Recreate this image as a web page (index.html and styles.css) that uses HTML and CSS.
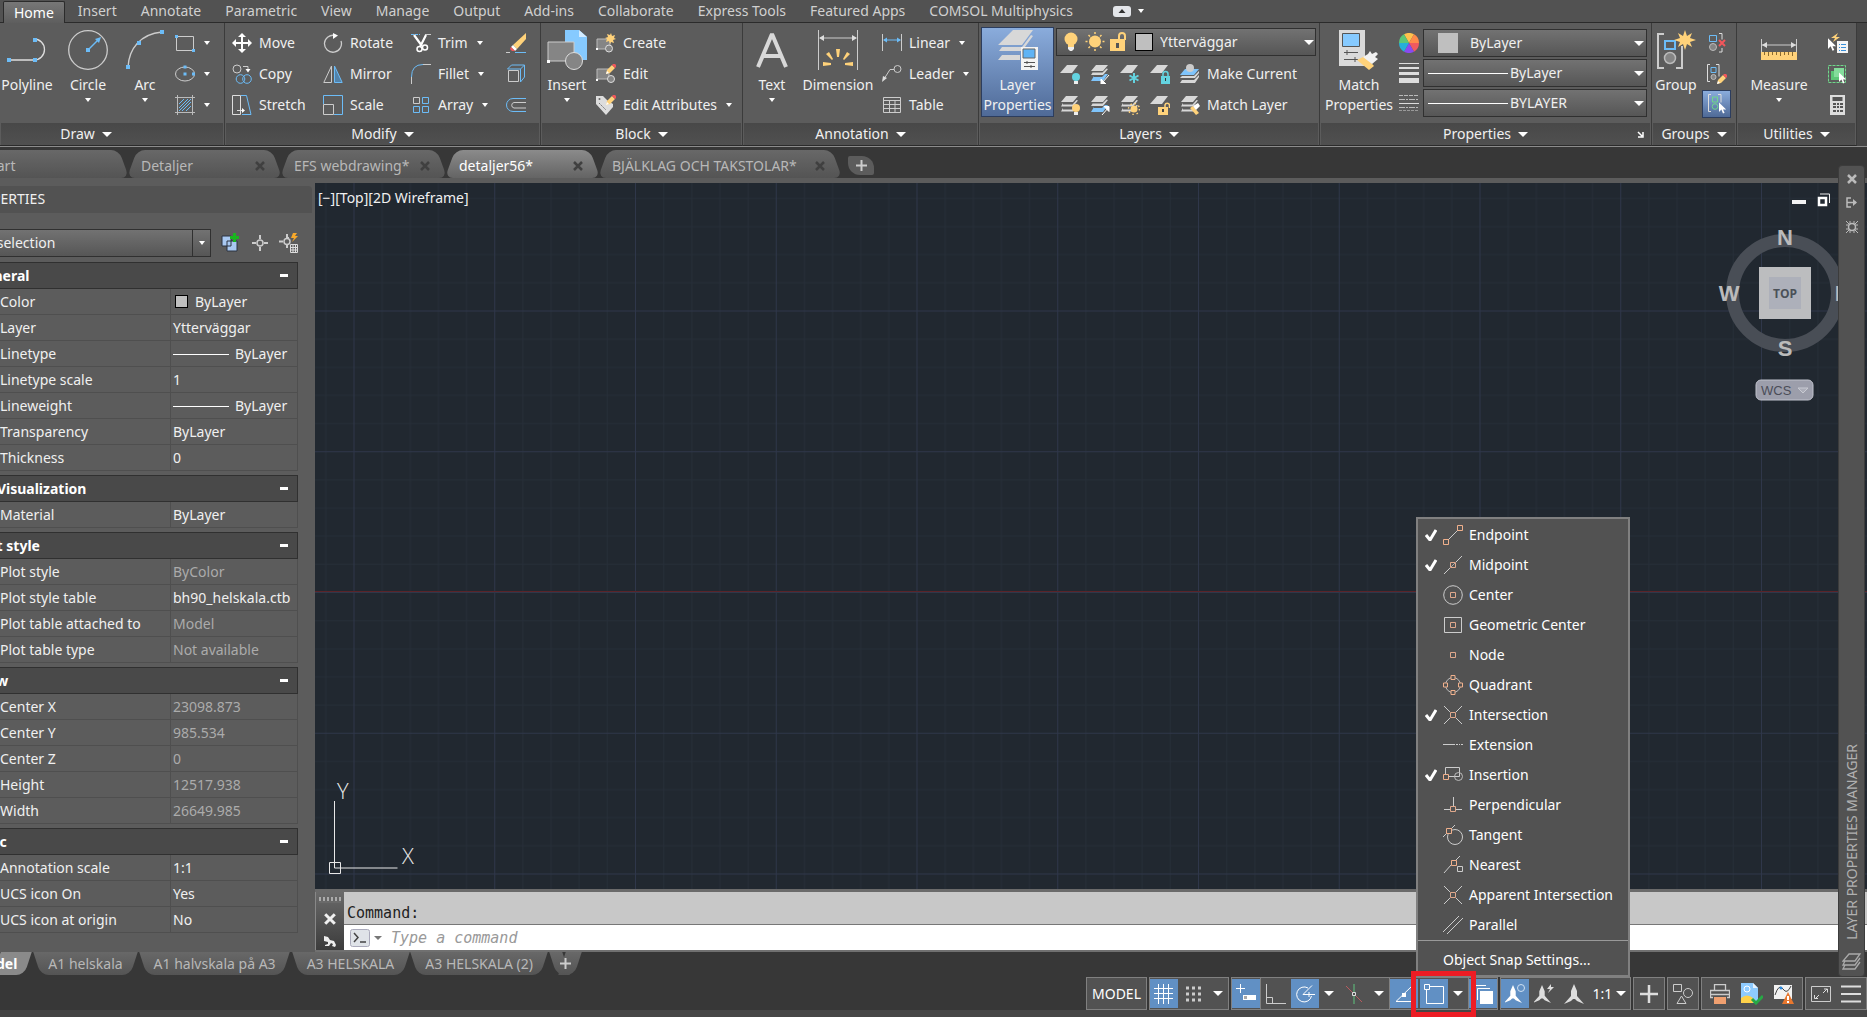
FILE: index.html
```html
<!DOCTYPE html>
<html lang="en">
  <head>
    <meta charset="UTF-8" />
    <meta name="viewport" content="width=device-width, initial-scale=1.0" />
    <title>detaljer56</title>
    <link rel="stylesheet" href="styles.css">
  </head>
  <body>
    <!-- Shared icon shapes -->
    <svg class="sprite" aria-hidden="true">
      <symbol id="plane" viewBox="0 0 20 20"><path d="M7 1h11l-6 8H0z" fill="#d8d8d8" /></symbol>
      <symbol id="stack" viewBox="0 0 20 20">
        <path d="M6 1h12l-5 6H1z" fill="#d8d8d8" />
        <path d="M3 8L1 11.500h12l5-6-1.500-.5-4 4.500H3zM3 13l-2 3.500h12l5-6-1.500-.5-4 4.500H3z" fill="#d8d8d8" />
      </symbol>
      <symbol id="stack-blue" viewBox="0 0 20 20">
        <path d="M6 1h12l-5 6H1zM3 8L1 11h12l5-6-1.500-.5-4 4H3z" fill="#d8d8d8" />
        <path d="M4 12l-3 5h12l5-7h-3l-3 3H4z" fill="#7fc4fb" />
      </symbol>
      <symbol id="pencil" viewBox="0 0 10 10">
        <path d="M0 10l1-4 5-5 3 3-5 5z" fill="#ffd27a" /><path d="M6 1l1-1h2l1 1v2L9 4z" fill="#f2565b" /><path d="M0 10l1-3 2 2z" fill="#fff" />
      </symbol>
      <symbol id="cursor" viewBox="0 0 10 14"><path d="M0 0v12l3-3 2 5 2-1-2-4h4z" fill="#fff" /></symbol>
      <symbol id="close" viewBox="0 0 10 10"><path d="M1 1l8 8M9 1L1 9" stroke="currentColor" stroke-width="2.500" /></symbol>
      <symbol id="snap-x" viewBox="0 0 20 20">
        <path d="M1 1l6 6M13 13l6 6M19 1l-6 6M7 13l-6 6" stroke="#ccc" /><path d="M7.500 7.500h5v5h-5z" stroke="#e0a98c" fill="none" />
      </symbol>
      <symbol id="person" viewBox="0 0 20 20"><path d="M10 0l3 7v5l7 8-7-3-2-2h-2l-2 2-7 3 7-8V7z" fill="currentColor" /></symbol>
    </svg>

    <nav class="ribbon-tabs">
      <button class="ribbon-tab active">Home</button>
      <button class="ribbon-tab">Insert</button>
      <button class="ribbon-tab">Annotate</button>
      <button class="ribbon-tab">Parametric</button>
      <button class="ribbon-tab">View</button>
      <button class="ribbon-tab">Manage</button>
      <button class="ribbon-tab">Output</button>
      <button class="ribbon-tab">Add-ins</button>
      <button class="ribbon-tab">Collaborate</button>
      <button class="ribbon-tab">Express Tools</button>
      <button class="ribbon-tab">Featured Apps</button>
      <button class="ribbon-tab">COMSOL Multiphysics</button>
      <button class="ribbon-toggle" aria-label="Minimize ribbon">
        <svg width="18" height="11" viewBox="0 0 18 11"><rect width="18" height="11" rx="3" fill="#e4e6ea" /><path d="M5.500 7L9 3l3.500 4z" fill="#333" /></svg>
        <i class="caret"></i>
      </button>
    </nav>

    <section class="ribbon">
      <div class="panel panel-draw">
        <div class="panel-body">
          <button class="tool-big">
            <svg width="40" height="40" viewBox="0 0 40 40"><path d="M1 30h26a10.500 10.500 0 0 0 0-21" stroke="#ddd" fill="none" stroke-width="1.300" /><path d="M0 28h4v4H0zM26 28h4v4h-4zM26 8h4v4h-4z" fill="#6cbcf7" /></svg>
            Polyline
          </button>
          <button class="tool-big">
            <svg width="40" height="40" viewBox="0 0 40 40"><circle cx="20" cy="20" r="19.300" stroke="#ccc" fill="none" stroke-width="1.300" /><path d="M20 20l11-11" stroke="#6cbcf7" stroke-width="1.500" /><path d="M18 18h4v4h-4zM27 9l6-2-2 6z" fill="#6cbcf7" /></svg>
            Circle<i class="caret"></i>
          </button>
          <button class="tool-big">
            <svg width="40" height="40" viewBox="0 0 40 40"><path d="M3 37C4 19 15 4 37 2" stroke="#ccc" fill="none" stroke-width="1.300" /><path d="M1 35h4v4H1zM12 11h4v4h-4zM35 0h4v4h-4z" fill="#6cbcf7" /></svg>
            Arc<i class="caret"></i>
          </button>
          <div class="tools">
            <button class="tool" aria-label="Rectangle"><svg width="20" height="20" viewBox="0 0 20 20"><path d="M1.500 3.500h17v14h-17z" stroke="#ccc" fill="none" /><path d="M0 2h3v3H0zM17 16h3v3h-3z" fill="#6cbcf7" /></svg><i class="caret"></i></button>
            <button class="tool" aria-label="Ellipse"><svg width="20" height="20" viewBox="0 0 20 20"><ellipse cx="10" cy="10" rx="9.500" ry="7" stroke="#ccc" fill="none" /><path d="M8.500 1.500h3v3h-3zM8.500 8.500h3v3h-3zM17 8.500h3v3h-3z" fill="#6cbcf7" /></svg><i class="caret"></i></button>
            <button class="tool" aria-label="Hatch"><svg width="20" height="20" viewBox="0 0 20 20"><path d="M0 2.500h20M0 17.500h20M2.500 0v20M17.500 0v20" stroke="#bbb" /><path d="M4 9l5-5M4 13l9-9M4 16L16 4M7 16l9-9M11 16l5-5" stroke="#6cbcf7" /></svg><i class="caret"></i></button>
          </div>
        </div>
        <button class="panel-title">Draw<i class="caret wide"></i></button>
      </div>

      <div class="panel panel-modify">
        <div class="panel-body">
          <div class="tools">
            <button class="tool"><svg width="20" height="20" viewBox="0 0 20 20"><path d="M10 0l4 4h-3v5h5V6l4 4-4 4v-3h-5v5h3l-4 4-4-4h3v-5H4v3l-4-4 4-4v3h5V4H6z" fill="#fff" /></svg>Move</button>
            <button class="tool"><svg width="20" height="20" viewBox="0 0 20 20"><circle cx="5" cy="5" r="4" stroke="#ccc" fill="none" /><path d="M11 2.500h5V6" stroke="#ccc" fill="none" /><path d="M13.500 5h5L16 8.500z" fill="#fff" /><circle cx="8.500" cy="15" r="4.300" stroke="#6cbcf7" fill="none" /><circle cx="15" cy="15" r="4.300" stroke="#6cbcf7" fill="none" /></svg>Copy</button>
            <button class="tool"><svg width="20" height="20" viewBox="0 0 20 20"><path d="M.5.500h8v19h-8zM5 15.500h6" stroke="#ddd" fill="none" /><path d="M10 13l3 2.500-3 2.500z" fill="#fff" /><path d="M9 .5h5.500l4.500 19h-9" stroke="#6cbcf7" fill="none" /></svg>Stretch</button>
          </div>
          <div class="tools">
            <button class="tool"><svg width="20" height="20" viewBox="0 0 20 20"><path d="M18 8a8.500 8.500 0 1 1-6-5.500" stroke="#ccc" fill="none" stroke-width="1.300" /><path d="M10 0l5 2.500L10 6z" fill="#fff" /></svg>Rotate</button>
            <button class="tool"><svg width="20" height="20" viewBox="0 0 20 20"><path d="M8.500 2v16.500H.800z" stroke="#ccc" fill="none" /><path d="M11.500 2v16.500h7.700z" stroke="#6cbcf7" fill="#5283ab" /></svg>Mirror</button>
            <button class="tool"><svg width="20" height="20" viewBox="0 0 20 20"><path d="M.5 9V.5h19v19H11" stroke="#6cbcf7" fill="none" /><path d="M.5 9.500h10v10H.5z" stroke="#ccc" fill="none" /></svg>Scale</button>
          </div>
          <div class="tools">
            <button class="tool"><svg width="20" height="20" viewBox="0 0 20 20"><path d="M0 1.500h9" stroke="#6cbcf7" stroke-dasharray="3 1" /><path d="M14 1.500h6" stroke="#ccc" /><path d="M3 2l8 11M15 2L9 14" stroke="#fff" stroke-width="2.200" /><circle cx="8.500" cy="16" r="2.500" stroke="#fff" stroke-width="1.500" fill="none" /><circle cx="14" cy="14.500" r="2.500" stroke="#fff" stroke-width="1.500" fill="none" /></svg>Trim<i class="caret"></i></button>
            <button class="tool"><svg width="20" height="20" viewBox="0 0 20 20"><path d="M.5 20v-7M12 .500h8" stroke="#ccc" /><path d="M.5 13Q.500.500 12 .500" stroke="#6cbcf7" fill="none" /></svg>Fillet<i class="caret"></i></button>
            <button class="tool"><svg width="20" height="20" viewBox="0 0 20 20"><path d="M2.500 2.500h6v6h-6z" stroke="#ccc" fill="none" /><path d="M11.500 2.500h6v6h-6zM2.500 11.500h6v6h-6zM11.500 11.500h6v6h-6z" stroke="#6cbcf7" fill="none" /></svg>Array<i class="caret"></i></button>
          </div>
          <div class="tools">
            <button class="tool" aria-label="Erase"><svg width="20" height="20" viewBox="0 0 20 20"><path d="M0 19.500h4" stroke="#ccc" /><path d="M9 19.500h11" stroke="#6cbcf7" /><path d="M20 0v6l-9 10-4-4z" fill="#ffd27a" /><path d="M7 12l4 4-2 2-4-4z" fill="#fff" /><path d="M5 14l4 4H6l-2-2z" fill="#f2565b" /></svg></button>
            <button class="tool" aria-label="Explode"><svg width="20" height="20" viewBox="0 0 20 20"><path d="M2.500 6.500h10v11h-10z" stroke="#ccc" fill="none" /><path d="M1.500 5l4-4h13v12l-4 5M14.500 18V5h-13M14.500 5l4-4" stroke="#6cbcf7" fill="none" /></svg></button>
            <button class="tool" aria-label="Offset"><svg width="20" height="20" viewBox="0 0 20 20"><path d="M20 3.500H7a6.500 6.500 0 0 0 0 13h13" stroke="#6cbcf7" fill="none" /><path d="M20 7.500H8a2.800 2.800 0 0 0 0 5.500h12" stroke="#ccc" fill="none" /></svg></button>
          </div>
        </div>
        <button class="panel-title">Modify<i class="caret wide"></i></button>
      </div>

      <div class="panel panel-block">
        <div class="panel-body">
          <button class="tool-big">
            <svg width="40" height="40" viewBox="0 0 40 40"><path d="M18 0h14l8 7v23H18z" fill="#86caff" /><path d="M32 0l8 7h-8z" fill="#d3ebff" /><path d="M1 12h26v19H1z" fill="#858585" stroke="#ccc" /><circle cx="27" cy="31" r="8.500" fill="#858585" stroke="#ddd" /><path d="M0 30h3v3H0z" fill="#fff" /></svg>
            Insert<i class="caret"></i>
          </button>
          <div class="tools">
            <button class="tool"><svg width="20" height="20" viewBox="0 0 20 20"><path d="M1 6h13v10H1z" fill="#858585" stroke="#bbb" /><circle cx="13" cy="15.500" r="3.500" fill="#858585" stroke="#ddd" /><path d="M15 0l1 3 3-1-1 3 2 1-3 1 1 3-3-1-1 2-1-3-3 1 1-3-2-1 3-1-1-3 3 1z" fill="#ffd27a" /><path d="M0 15h2v2H0z" fill="#fff" /></svg>Create</button>
            <button class="tool"><svg width="20" height="20" viewBox="0 0 20 20"><path d="M1 5h12v10H1z" fill="#858585" stroke="#bbb" /><circle cx="15" cy="15" r="3.500" fill="#858585" stroke="#ddd" /><use href="#pencil" x="10" y="0" width="10" height="10" /><path d="M0 15h2v2H0z" fill="#fff" /></svg>Edit</button>
            <button class="tool"><svg width="20" height="20" viewBox="0 0 20 20"><path d="M0 1h7l5 5 5 3v3l-7 8L0 9z" fill="#ddd" /><path d="M3 8l7 7" stroke="#777" stroke-dasharray="2 1" /><circle cx="3.500" cy="4" r="1" fill="#666" /><use href="#pencil" x="10" y="0" width="10" height="10" /></svg>Edit Attributes<i class="caret"></i></button>
          </div>
        </div>
        <button class="panel-title">Block<i class="caret wide"></i></button>
      </div>

      <div class="panel panel-annotation">
        <div class="panel-body">
          <button class="tool-big">
            <svg width="40" height="40" viewBox="0 0 40 40"><path d="M6 37L20 4l14 33M11 26h18" stroke="#d8d8d8" stroke-width="4" fill="none" stroke-linejoin="bevel" /></svg>
            Text<i class="caret"></i>
          </button>
          <button class="tool-big">
            <svg width="40" height="40" viewBox="0 0 40 40"><path d="M.5 0v40M39.500 0v40M2 8h36" stroke="#ccc" /><path d="M1 8l5-3v6zM39 8l-5-3v6z" fill="#ddd" /><path d="M18 19h4l-1 8h-2zM8 24l3-2 4 7-1 1zM32 24l-3-2-4 7 1 1zM5 32l8 1v2l-8 1zM35 32l-8 1v2l8 1z" fill="#ffd27a" /></svg>
            Dimension
          </button>
          <div class="tools">
            <button class="tool"><svg width="20" height="20" viewBox="0 0 20 20"><path d="M.5 1v17M19.500 1v17" stroke="#ccc" /><path d="M2 7h16" stroke="#6cbcf7" /><path d="M1 7l4-2.500v5zM19 7l-4-2.500v5z" fill="#6cbcf7" /></svg>Linear<i class="caret"></i></button>
            <button class="tool"><svg width="20" height="20" viewBox="0 0 20 20"><path d="M2 15l6-9.500h4" stroke="#ccc" fill="none" /><circle cx="15.500" cy="5" r="3.500" stroke="#ccc" fill="none" /><path d="M0 18l1-6 4 2z" fill="#ddd" /></svg>Leader<i class="caret"></i></button>
            <button class="tool"><svg width="20" height="20" viewBox="0 0 20 20"><path d="M1.500 2.500h17v15h-17zM2 5.500h16M2 9.500h16M2 13.500h16M7.500 6v11M13 6v11" stroke="#ccc" fill="none" /></svg>Table</button>
          </div>
        </div>
        <button class="panel-title">Annotation<i class="caret wide"></i></button>
      </div>

      <div class="panel panel-layers">
        <div class="panel-body">
          <button class="tool-big pressed">
            <svg width="40" height="40" viewBox="0 0 40 40"><path d="M15 0h20L24 15H0zM4 17H24l9-12 2 1-11 15H1zM4 25H22v5H0z" fill="#d8d8d8" /><path d="M23 17h17v23H23z" fill="#f4f4f4" /><path d="M25 19h12v9H25z" fill="#5fb3f5" stroke="#666" /><path d="M26 32.500h11M26 36.500h11M29 31v3M33 35v3" stroke="#555" /></svg>
            Layer<br>Properties
          </button>
          <div class="layer-tools">
            <div class="combo">
              <svg width="62" height="20" viewBox="0 0 62 20"><circle cx="7" cy="7" r="6.500" fill="#ffd27a" /><path d="M4 12h6v3H4z" fill="#ffd27a" /><path d="M4 15h6v2l-2 2H6l-2-2z" fill="#eee" /><circle cx="31" cy="9.500" r="6" fill="#ffd27a" /><path d="M31 0v2M31 17v2M21.500 9.500h2M38.500 9.500h2M24.500 3l1.500 1.500M36 14.500l1.500 1.500M24.500 16l1.500-1.500M36 4.500L37.500 3" stroke="#ffd27a" stroke-width="1.500" /><path d="M46 7h15v12H46z" fill="#ffd27a" /><path d="M56 8V4a3 3 0 0 1 6 0v4" transform="translate(-1)" stroke="#ffd27a" stroke-width="2" fill="none" /><path d="M52 11h3v5h-3z" fill="#555" /></svg>
              <i class="swatch framed"></i>
              <select aria-label="Layer"><option>Ytterväggar</option></select>
              <i class="caret wide"></i>
            </div>
            <div class="layer-row">
              <button aria-label="Layer off"><svg width="20" height="20" viewBox="0 0 20 20"><use href="#plane" width="20" height="20" /><circle cx="16" cy="13" r="4" fill="#63d3e0" /><path d="M14 17h4v3h-4z" fill="#eee" /></svg></button>
              <button aria-label="Isolate"><svg width="20" height="20" viewBox="0 0 20 20"><use href="#stack-blue" width="20" height="20" /><path d="M19 11l-7 8M11 20v-5l5 5z" stroke="#fff" fill="#fff" /></svg></button>
              <button aria-label="Freeze"><svg width="20" height="20" viewBox="0 0 20 20"><use href="#plane" width="20" height="20" /><path d="M14 9v10M9.500 11.500l9 5M9.500 16.500l9-5" stroke="#63d3e0" stroke-width="2" /></svg></button>
              <button aria-label="Lock"><svg width="20" height="20" viewBox="0 0 20 20"><use href="#plane" width="20" height="20" /><path d="M11 12h9v8h-9z" fill="#63d3e0" /><path d="M13 12v-2a2.500 2.500 0 0 1 5 0v2" stroke="#63d3e0" stroke-width="1.500" fill="none" /><path d="M15 14h1v3h-1z" fill="#333" /></svg></button>
              <button class="labelled"><svg width="20" height="20" viewBox="0 0 20 20"><path d="M5 5h14l-5 6H0z" fill="#7fc4fb" /><path d="M2 12h12l5-5v2l-4 5H0zM2 16h12l5-5v2l-4 6H0z" fill="#d8d8d8" /><circle cx="10" cy="4" r="4" fill="#ccc" /></svg>Make Current</button>
            </div>
            <div class="layer-row">
              <button aria-label="Turn all layers on"><svg width="20" height="20" viewBox="0 0 20 20"><use href="#stack" width="20" height="20" /><circle cx="16" cy="13" r="4" fill="#ffd27a" /><path d="M14 17h4v3h-4z" fill="#eee" /></svg></button>
              <button aria-label="Unisolate"><svg width="20" height="20" viewBox="0 0 20 20"><use href="#stack-blue" width="20" height="20" /><path d="M12 20l7-8M14 11.500h5v5z" stroke="#fff" fill="#fff" /></svg></button>
              <button aria-label="Thaw all layers"><svg width="20" height="20" viewBox="0 0 20 20"><use href="#stack" width="20" height="20" /><circle cx="14" cy="14" r="3.500" fill="#ffd27a" /><circle cx="14" cy="14" r="5.500" fill="none" stroke="#ffd27a" stroke-width="1.500" stroke-dasharray="1.500 2.800" /></svg></button>
              <button aria-label="Unlock"><svg width="20" height="20" viewBox="0 0 20 20"><use href="#plane" width="20" height="20" /><path d="M8 12h10v8H8z" fill="#ffd27a" /><path d="M15 12v-2a2.300 2.300 0 0 1 4.500 0v3" stroke="#ffd27a" stroke-width="1.500" fill="none" /><path d="M12 14h2v3h-2z" fill="#444" /></svg></button>
              <button class="labelled"><svg width="20" height="20" viewBox="0 0 20 20"><use href="#stack" width="20" height="20" /><path d="M10 13l3-2 6 7-3 2z" fill="#ffd27a" /><path d="M13 11l5-3 2 3-4 4z" fill="#fff" /></svg>Match Layer</button>
            </div>
          </div>
        </div>
        <button class="panel-title">Layers<i class="caret wide"></i></button>
      </div>

      <div class="panel panel-properties">
        <div class="panel-body">
          <button class="tool-big">
            <svg width="40" height="40" viewBox="0 0 40 40"><path d="M0 0h26v36H0z" fill="#dadada" /><path d="M3.500 3.500h17v13h-17z" fill="#86caff" stroke="#555" /><path d="M5 22.500h14M5 29.500h14M8 20v5M16 27v5" stroke="#555" /><path d="M18 30l8-4 9 10-5 4z" fill="#ffd27a" /><path d="M24 27l5-3 2-3 2 3 4-2 2 2-3 3 3 2-6 5z" fill="#f2f2f2" /></svg>
            Match<br>Properties
          </button>
          <div class="property-combos">
            <svg width="20" height="20" viewBox="-10 -10 20 20"><path d="M0 0L-5-8.660A10 10 0 0 1 5-8.660z" fill="#ffc14d" /><path d="M0 0L5-8.660A10 10 0 0 1 10 0z" fill="#ff8a4a" /><path d="M0 0h10A10 10 0 0 1 5 8.660z" fill="#f05a5f" /><path d="M0 0l5 8.660a10 10 0 0 1-10 0z" fill="#8a4af0" /><path d="M0 0l-5 8.660A10 10 0 0 1-10 0z" fill="#25b0d8" /><path d="M0 0h-10A10 10 0 0 1-5-8.660z" fill="#5cc777" /></svg>
            <div class="combo">
              <i class="swatch"></i>
              <select aria-label="Object color"><option>ByLayer</option></select>
              <i class="caret wide"></i>
            </div>
            <svg width="20" height="20" viewBox="0 0 20 20"><path d="M0 0h20v1H0zM0 4h20v2H0zM0 9h20v3H0zM0 15h20v5H0z" fill="#ddd" /></svg>
            <div class="combo">
              <i class="line-sample"></i>
              <select aria-label="Lineweight"><option>ByLayer</option></select>
              <i class="caret wide"></i>
            </div>
            <svg width="20" height="20" viewBox="0 0 20 20"><path d="M0 2.500h20" stroke="#bbb" stroke-dasharray="4 1" /><path d="M0 6.500h20M0 14.500h20" stroke="#bbb" stroke-dasharray="6 1 2 1" /><path d="M0 10.500h20" stroke="#ddd" /><path d="M0 17.500h20" stroke="#999" stroke-dasharray="3 1" /></svg>
            <div class="combo">
              <i class="line-sample"></i>
              <select aria-label="Linetype"><option>BYLAYER</option></select>
              <i class="caret wide"></i>
            </div>
          </div>
        </div>
        <div class="panel-title">
          <button>Properties<i class="caret wide"></i></button>
          <button class="launcher" aria-label="Open properties palette"><svg width="7" height="7" viewBox="0 0 7 7"><path d="M1 1l4 4M6 1v5H1" stroke="#fff" stroke-width="1.500" fill="none" /></svg></button>
        </div>
      </div>

      <div class="panel panel-groups">
        <div class="panel-body">
          <button class="tool-big">
            <svg width="40" height="40" viewBox="0 0 40 40"><path d="M8 4H2v34h6M20 38h6V16" stroke="#ccc" stroke-width="2" fill="none" /><path d="M9 11h10v8H9z" stroke="#6cbcf7" stroke-width="2" fill="none" /><circle cx="14" cy="28" r="5.500" fill="#858585" stroke="#bbb" stroke-width="1.500" /><path d="M29 0l2 6 5-3-2 5 6 2-6 2 2 5-5-3-2 6-2-6-5 3 2-5-6-2 6-2-2-5 5 3z" fill="#ffd27a" /></svg>
            Group
          </button>
          <div class="tools icon-only">
            <button class="tool" aria-label="Ungroup"><svg width="20" height="20" viewBox="0 0 20 20"><path d="M2.500 2.500h7v6h-7z" stroke="#6cbcf7" fill="none" /><circle cx="6" cy="14" r="3.500" fill="#858585" stroke="#bbb" /><path d="M12 .5h3v6M15 15v4h-3" stroke="#ddd" fill="none" /><path d="M12 7l6 6M18 7l-6 6" stroke="#f2565b" stroke-width="2" /></svg></button>
            <button class="tool" aria-label="Group edit"><svg width="20" height="20" viewBox="0 0 20 20"><path d="M3 .5H.500v17H3M9 .5h3v12" stroke="#ddd" fill="none" /><path d="M4 3.500h5v5H4z" stroke="#6cbcf7" fill="none" /><circle cx="6.500" cy="13" r="2.500" fill="#858585" stroke="#bbb" /><use href="#pencil" x="10" y="10" width="10" height="10" /></svg></button>
            <button class="tool pressed" aria-label="Group selection"><svg width="20" height="20" viewBox="0 0 20 20"><path d="M4 .5H1.500v17H4M11 .5h3v8" stroke="#ddd" fill="none" /><path d="M5.500 3h5v5h-5z" stroke="#6fd98a" fill="none" /><circle cx="8" cy="12.500" r="2.800" stroke="#6fd98a" fill="none" /><use href="#cursor" x="12" y="8" width="8" height="12" /></svg></button>
          </div>
        </div>
        <button class="panel-title">Groups<i class="caret wide"></i></button>
      </div>

      <div class="panel panel-utilities">
        <div class="panel-body">
          <button class="tool-big">
            <svg width="40" height="40" viewBox="0 0 40 40"><path d="M2.500 9v20M37.500 9v20M3 15h34" stroke="#ccc" /><path d="M3 15l5-3v6zM37 15l-5-3v6z" fill="#ddd" /><path d="M2 22h36v8H2z" fill="#ffd27a" /><path d="M5.500 22v3M9.500 22v4M13.500 22v3M17.500 22v3M21.500 22v4M25.500 22v3M29.500 22v3M33.500 22v4" stroke="#8a6a30" /></svg>
            Measure<i class="caret"></i>
          </button>
          <div class="tools icon-only">
            <button class="tool" aria-label="Quick select"><svg width="20" height="20" viewBox="0 0 20 20"><path d="M9 8h11v12H9z" fill="#f4f4f4" /><path d="M11 11.500h1M11 14.500h1M11 17.500h1M13 11.500h5M13 14.500h5M13 17.500h5" stroke="#3a8fd8" /><use href="#cursor" x="0" y="5" width="9" height="13" /><path d="M10 0L3 5h4l-2 4 7-5H8z" fill="#ffd27a" /></svg></button>
            <button class="tool" aria-label="Select all"><svg width="20" height="20" viewBox="0 0 20 20"><path d="M.5 1.500h17v17H.5z" stroke="#6fd98a" stroke-dasharray="3 1" fill="none" /><path d="M3 7h9v9H3z" fill="#5cc777" /><path d="M6 4h10v9H6z" fill="#84dd9c" /><use href="#cursor" x="11" y="8" width="8" height="12" /></svg></button>
            <button class="tool" aria-label="Quick calculator"><svg width="20" height="20" viewBox="0 0 20 20"><path d="M2 0h15v20H2z" fill="#ddd" /><path d="M4.500 2h10v4h-10z" fill="#555" /><path d="M5 8h3v2H5zM9 8h2v2H9zM12 8h3v2h-3zM5 11h3v2H5zM9 11h2v2H9zM12 11h3v2h-3zM5 15h3v2H5zM9 15h2v2H9zM12 15h3v2h-3z" fill="#555" /></svg></button>
          </div>
        </div>
        <button class="panel-title">Utilities<i class="caret wide"></i></button>
      </div>
    </section>

    <nav class="file-tabs">
      <a href="#" class="file-tab start">Start</a>
      <a href="#" class="file-tab detaljer">Detaljer<svg width="10" height="10"><use href="#close" /></svg></a>
      <a href="#" class="file-tab efs">EFS webdrawing*<svg width="10" height="10"><use href="#close" /></svg></a>
      <a href="#" class="file-tab detaljer active">detaljer56*<svg width="10" height="10"><use href="#close" /></svg></a>
      <a href="#" class="file-tab bjalklag">BJÄLKLAG OCH TAKSTOLAR*<svg width="10" height="10"><use href="#close" /></svg></a>
      <button class="new-tab" aria-label="New drawing"><svg width="11" height="11" viewBox="0 0 11 11"><path d="M5.500 0v11M0 5.500h11" stroke="#ccc" stroke-width="2" /></svg></button>
    </nav>

    <main class="workspace">
      <aside class="palette">
        <h2>PROPERTIES</h2>
        <div class="selection-row">
          <div class="combo">
            <select aria-label="Selection"><option>No selection</option></select>
            <span class="drop"><i class="caret"></i></span>
          </div>
          <button aria-label="Toggle pickadd"><svg width="20" height="20" viewBox="0 0 20 20"><path d="M1 3h9v10H1zM6 8h10v10H6z" fill="#a9c9f2" stroke="#2b3340" /><path d="M13.500 0v9M9 4.500h9" stroke="#19b51e" stroke-width="3" /></svg></button>
          <button aria-label="Select objects"><svg width="18" height="18" viewBox="0 0 18 18"><path d="M9 1v4M9 13v4M1 9h4M13 9h4" stroke="#ccc" stroke-width="2" /><circle cx="9" cy="9" r="3" stroke="#ccc" stroke-width="1.500" fill="none" /></svg></button>
          <button aria-label="Quick select"><svg width="20" height="20" viewBox="0 0 20 20"><path d="M8 1v4M8 12v3M0 8.500h4M8 5h2" stroke="#ccc" stroke-width="2" /><circle cx="8" cy="8.500" r="3" stroke="#ccc" stroke-width="1.500" fill="none" /><path d="M14 0l-2 5h3l-2 4 6-6h-3l2-3z" fill="#f7a82a" /><path d="M11.500 11.500h7v8h-7zM12 14.500h6M12 17h6M14 12v7M16.500 12v7" stroke="#ddd" fill="none" /></svg></button>
        </div>

        <section class="group">
          <h3>General<i></i></h3>
          <table>
            <tr><th>Color</th><td><i class="swatch tiny"></i>ByLayer</td></tr>
            <tr><th>Layer</th><td>Ytterväggar</td></tr>
            <tr><th>Linetype</th><td><i class="line-sample"></i>ByLayer</td></tr>
            <tr><th>Linetype scale</th><td>1</td></tr>
            <tr><th>Lineweight</th><td><i class="line-sample"></i>ByLayer</td></tr>
            <tr><th>Transparency</th><td>ByLayer</td></tr>
            <tr><th>Thickness</th><td>0</td></tr>
          </table>
        </section>
        <section class="group">
          <h3>3D Visualization<i></i></h3>
          <table>
            <tr><th>Material</th><td>ByLayer</td></tr>
          </table>
        </section>
        <section class="group">
          <h3>Plot style<i></i></h3>
          <table>
            <tr><th>Plot style</th><td class="locked">ByColor</td></tr>
            <tr><th>Plot style table</th><td>bh90_helskala.ctb</td></tr>
            <tr><th>Plot table attached to</th><td class="locked">Model</td></tr>
            <tr><th>Plot table type</th><td class="locked">Not available</td></tr>
          </table>
        </section>
        <section class="group">
          <h3>View<i></i></h3>
          <table>
            <tr><th>Center X</th><td class="locked">23098.873</td></tr>
            <tr><th>Center Y</th><td class="locked">985.534</td></tr>
            <tr><th>Center Z</th><td class="locked">0</td></tr>
            <tr><th>Height</th><td class="locked">12517.938</td></tr>
            <tr><th>Width</th><td class="locked">26649.985</td></tr>
          </table>
        </section>
        <section class="group">
          <h3>Misc<i></i></h3>
          <table>
            <tr><th>Annotation scale</th><td>1:1</td></tr>
            <tr><th>UCS icon On</th><td>Yes</td></tr>
            <tr><th>UCS icon at origin</th><td>No</td></tr>
          </table>
        </section>
      </aside>

      <div class="drawing">
        <div class="canvas">
          <svg class="grid" aria-hidden="true">
            <defs>
              <pattern id="grid" width="140.750" height="140.750" x="38.500" y="127.500" patternUnits="userSpaceOnUse">
                <path d="M28.650 0v141M56.800 0v141M84.950 0v141M113.100 0v141M0 28.650h141M0 56.800h141M0 84.950h141M0 113.100h141" stroke="#262e38" />
                <path d="M.5 0v141M0 .5h141" stroke="#2f374a" />
              </pattern>
            </defs>
            <rect width="100%" height="100%" fill="url(#grid)" />
            <path d="M0 408.500h4000" stroke="#5a2429" />
          </svg>
          <span class="view-label">[−][Top][2D Wireframe]</span>
          <div class="window-buttons">
            <button aria-label="Minimize"><svg width="14" height="14" viewBox="0 0 14 14"><path d="M0 7h14v4H0z" fill="#f2f2f2" /></svg></button>
            <button aria-label="Restore"><svg width="14" height="14" viewBox="0 0 14 14"><path d="M3 1h9.500v9" stroke="#eee" fill="none" /><path d="M2 5h7v7H2z" stroke="#fff" stroke-width="2.500" fill="none" /></svg></button>
          </div>
          <svg class="view-cube" width="124" height="170" viewBox="0 0 124 170">
            <circle cx="62" cy="62" r="52.500" stroke="#494e56" stroke-width="13" fill="none" />
            <path d="M36 36h52v52H36z" fill="#bcbdbf" /><path d="M46 46h32v32H46z" fill="#adb0ba" />
            <g class="compass"><text x="62" y="14">N</text><text x="62" y="125">S</text><text x="6" y="70">W</text><text x="119" y="70">E</text></g>
            <text class="face" x="62" y="67">TOP</text>
            <rect x="33" y="149" width="57" height="20" rx="5" fill="#9c9eab" stroke="#c0c2cc" />
            <text class="wcs" x="38" y="164">WCS</text><path d="M75 157h10l-5 5z" fill="#abadb8" stroke="#c8cad2" />
          </svg>
          <svg class="ucs" width="100" height="100" viewBox="0 0 100 100">
            <path d="M.5 81.500h11v11H.500zM5.500 20v67h63" stroke="#e8e8e8" fill="none" />
            <text x="8" y="18">Y</text><text x="73" y="83">X</text>
          </svg>
        </div>

        <div class="command">
          <div class="command-handle">
            <i class="grip"></i>
            <button aria-label="Close command line"><svg width="12" height="12" viewBox="0 0 10 10"><use href="#close" width="10" height="10" /></svg></button>
            <button aria-label="Customize"><svg width="14" height="12" viewBox="0 0 14 12"><path d="M1 1l4 1 2 3 4 1 2 4-1 2-3-1 1-2-2-1-2 3H2l0-1 3-1 0-2-4-1z" fill="#eee" /></svg></button>
          </div>
          <div class="command-body">
            <output>Command:</output>
            <div class="command-line">
              <svg width="20" height="18" viewBox="0 0 20 18"><rect x=".5" y=".5" width="19" height="17" rx="2" fill="#dfe3e8" stroke="#aab" /><path d="M4 4l4 4.500L4 13M10 13h6" stroke="#444" stroke-width="1.500" fill="none" /></svg>
              <i class="caret"></i>
              <input type="text" aria-label="Command" placeholder="Type a command">
            </div>
          </div>
        </div>
      </div>
    </main>

    <nav class="layout-tabs">
      <a href="#" class="layout-tab model active">Model</a>
      <a href="#" class="layout-tab">A1 helskala</a>
      <a href="#" class="layout-tab">A1 halvskala på A3</a>
      <a href="#" class="layout-tab">A3 HELSKALA</a>
      <a href="#" class="layout-tab">A3 HELSKALA (2)</a>
      <a href="#" class="layout-tab add" aria-label="New layout"><svg width="11" height="11" viewBox="0 0 11 11"><path d="M5.500 0v11M0 5.500h11" stroke="#ccc" stroke-width="2" /></svg></a>
    </nav>

    <footer class="status">
      <div class="status-group"><button class="text">MODEL</button></div>
      <div class="status-group">
        <button class="on" aria-label="Grid"><svg width="20" height="20" viewBox="0 0 20 20"><path d="M4.500 0v20M9.500 0v20M14.500 0v20M0 4.500h19M0 9.500h19M0 14.500h19" stroke="#fff" /></svg></button>
        <button aria-label="Snap"><svg width="20" height="20" viewBox="0 0 20 20"><path d="M3 4h15M3 10h15M3 16h15" stroke="#ccc" stroke-width="3" stroke-dasharray="3 3" /></svg></button>
        <button class="drop" aria-label="Snap settings"><i class="caret wide"></i></button>
      </div>
      <div class="status-group joined">
        <button class="on" aria-label="Dynamic input"><svg width="20" height="20" viewBox="0 0 20 20"><path d="M4.500 0v9M0 4.500h9" stroke="#fff" /><path d="M7 11h13v5H7z" fill="#fff" /><path d="M8 12h3v3H8z" fill="#aaa" /></svg></button>
      </div>
      <div class="status-group joined">
        <button aria-label="Ortho"><svg width="20" height="20" viewBox="0 0 20 20"><path d="M.5 0v19.500H20M.5 13.500h6v6" stroke="#ccc" fill="none" /></svg></button>
        <button class="on" aria-label="Polar tracking"><svg width="20" height="20" viewBox="0 0 20 20"><path d="M13 4A7.500 7.500 0 1 0 16.500 12M8 10.500h12M8 10.500l9-9M14 8v5" stroke="#fff" fill="none" /></svg></button>
        <button class="drop" aria-label="Polar settings"><i class="caret wide"></i></button>
        <button aria-label="Isometric drafting"><svg width="20" height="20" viewBox="0 0 20 20"><path d="M2 2l16 16" stroke="#b85a5e" /><path d="M10 0v20" stroke="#5cab74" stroke-width="1.300" /><path d="M8.500 8.500h3v3h-3z" stroke="#ddd" fill="#525252" /></svg></button>
        <button class="drop" aria-label="Isometric settings"><i class="caret wide"></i></button>
      </div>
      <div class="status-group joined">
        <button class="on" aria-label="Object snap tracking"><svg width="20" height="20" viewBox="0 0 20 20"><path d="M18 2L2 17.500h18" stroke="#fff" fill="none" /><path d="M8 9h4v4H8z" fill="#fff" /></svg></button>
        <button class="on" aria-label="Object snap"><svg width="20" height="20" viewBox="0 0 20 20"><path d="M6 2.500h13.500v17h-17V6" stroke="#fff" fill="none" /><path d="M.5.500h5v5h-5z" stroke="#fff" fill="none" /></svg></button>
        <button class="drop" aria-label="Object snap settings"><i class="caret wide"></i></button>
      </div>
      <div class="status-group">
        <button class="on" aria-label="Lineweight display"><svg width="20" height="20" viewBox="0 0 20 20"><path d="M7 7h13v13H7z" fill="#fff" /><path d="M4.500 16V4.500H17M.500 12V1.500H13" stroke="#fff" fill="none" /></svg></button>
      </div>
      <div class="status-group">
        <button class="on bright" aria-label="Annotation visibility"><svg width="20" height="20" viewBox="0 0 20 20"><use href="#person" x="-1" width="18" height="20" /><circle cx="16" cy="4" r="3.500" stroke="#cfe0f2" fill="none" /></svg></button>
        <button aria-label="Auto scale"><svg width="20" height="20" viewBox="0 0 20 20"><use href="#person" x="-1" width="18" height="20" /><path d="M17 0l-4 5h3l-2 4 6-6h-3z" fill="#ddd" /></svg></button>
        <button aria-label="Annotation scale"><svg width="20" height="20" viewBox="0 0 20 20"><use href="#person" width="20" height="20" /></svg></button>
        <button class="text scale">1:1<i class="caret wide"></i></button>
      </div>
      <div class="status-group"><button aria-label="Workspace"><svg width="20" height="20" viewBox="0 0 20 20"><path d="M10 1v18M1 10h18" stroke="#ddd" stroke-width="2.500" /></svg></button></div>
      <div class="status-group"><button aria-label="Isolate objects"><svg width="20" height="20" viewBox="0 0 20 20"><path d="M.5.500h8v7h-8zM4 19.500L8.500 12l4.500 7.500z" stroke="#ccc" fill="none" /><circle cx="15" cy="9" r="4.500" stroke="#ccc" fill="none" /></svg></button></div>
      <div class="status-group roomy">
        <button aria-label="Plot"><svg width="20" height="20" viewBox="0 0 20 20"><path d="M4.500 6V.5h11V6M3 13.500H.500v-7h19v7H17M.500 10.500h19" stroke="#ccc" stroke-width="1.300" fill="none" /><path d="M4 13h12v7H4z" fill="#f0a070" /></svg></button>
        <button aria-label="Drawing status"><svg width="22" height="22" viewBox="0 0 22 22"><path d="M0 0h12l5 5v15H0z" fill="#8ecbff" /><path d="M12 0l5 5h-5z" fill="#e6f3ff" /><path d="M0 15q6-5 12 0v5H0z" fill="#ffd24a" /><circle cx="6" cy="6" r="3" stroke="#fff" fill="none" /><path d="M11 16l4 4 7-7" stroke="#27a845" stroke-width="3" fill="none" /></svg></button>
        <button aria-label="Graphics performance"><svg width="22" height="20" viewBox="0 0 22 20"><path d="M1 1h18v14H1z" fill="#f2f2f2" /><path d="M2 11q4-12 8-6t8-3" stroke="#444" fill="none" /><circle cx="8" cy="4" r="1.500" fill="#2a8ae0" /><path d="M15 8l6 12H9z" fill="#e8772e" /><path d="M14 12h2v4h-2zM14 17h2v2h-2z" fill="#fff" /></svg></button>
      </div>
      <div class="status-group">
        <button aria-label="Clean screen"><svg width="20" height="16" viewBox="0 0 20 16"><path d="M.5.500h19v15H.500z" stroke="#ccc" fill="none" /><path d="M12 7l4-4M13 3h3.500v3.500M8 9l-4 4M7 12.500H3.500V9" stroke="#ddd" fill="none" /></svg></button>
        <button aria-label="Customization"><svg width="20" height="20" viewBox="0 0 20 20"><path d="M0 2.500h20M0 10h20M0 17.500h20" stroke="#ddd" stroke-width="2" /></svg></button>
      </div>
    </footer>
    <div class="desktop-edge"><i></i></div>

    <!-- Object snap flyout -->
    <div class="snap-menu" role="menu">
      <button role="menuitemcheckbox" aria-checked="true"><svg class="check" width="12" height="12" viewBox="0 0 12 12"><path d="M1 6l4 5 6-10" /></svg><svg width="20" height="20" viewBox="0 0 20 20"><path d="M5 15L15 5" stroke="#ccc" /><path d="M.5 14.500h5v5h-5zM14.500.500h5v5h-5z" stroke="#f0b08c" fill="none" /></svg>Endpoint</button>
      <button role="menuitemcheckbox" aria-checked="true"><svg class="check" width="12" height="12" viewBox="0 0 12 12"><path d="M1 6l4 5 6-10" /></svg><svg width="20" height="20" viewBox="0 0 20 20"><path d="M1 19l6-6M13 7l6-6" stroke="#ccc" /><path d="M7.500 7.500h5v5h-5z" stroke="#e0a98c" fill="none" /><path d="M8 12l4-4" stroke="#aaa" /></svg>Midpoint</button>
      <button role="menuitemcheckbox" aria-checked="false"><svg class="check" width="12" height="12"></svg><svg width="20" height="20" viewBox="0 0 20 20"><circle cx="10" cy="10" r="9.300" stroke="#ccc" fill="none" /><path d="M7.500 7.500h5v5h-5z" stroke="#e0a98c" fill="none" /></svg>Center</button>
      <button role="menuitemcheckbox" aria-checked="false"><svg class="check" width="12" height="12"></svg><svg width="20" height="20" viewBox="0 0 20 20"><path d="M1.500 2.500h17v15h-17z" stroke="#ccc" fill="none" /><path d="M7.500 7.500h5v5h-5z" stroke="#e0a98c" fill="none" /></svg>Geometric Center</button>
      <button role="menuitemcheckbox" aria-checked="false"><svg class="check" width="12" height="12"></svg><svg width="20" height="20" viewBox="0 0 20 20"><path d="M7.500 7.500h5v5h-5z" stroke="#e0a98c" fill="none" /></svg>Node</button>
      <button role="menuitemcheckbox" aria-checked="false"><svg class="check" width="12" height="12"></svg><svg width="20" height="20" viewBox="0 0 20 20"><circle cx="10" cy="10" r="7.500" stroke="#bbb" fill="none" /><path d="M8 .500h4v4H8zM8 15.500h4v4H8zM.500 8h4v4h-4zM15.500 8h4v4h-4z" stroke="#f0b08c" fill="#525252" /></svg>Quadrant</button>
      <button role="menuitemcheckbox" aria-checked="true"><svg class="check" width="12" height="12" viewBox="0 0 12 12"><path d="M1 6l4 5 6-10" /></svg><svg width="20" height="20"><use href="#snap-x" width="20" height="20" /></svg>Intersection</button>
      <button role="menuitemcheckbox" aria-checked="false"><svg class="check" width="12" height="12"></svg><svg width="20" height="20" viewBox="0 0 20 20"><path d="M0 9.500h12M13 9.500h2M16 9.500h1M18 9.500h2" stroke="#ccc" /></svg>Extension</button>
      <button role="menuitemcheckbox" aria-checked="true"><svg class="check" width="12" height="12" viewBox="0 0 12 12"><path d="M1 6l4 5 6-10" /></svg><svg width="20" height="20" viewBox="0 0 20 20"><path d="M2.500 9V2.500h14v9H6" stroke="#ccc" fill="none" /><circle cx="15.500" cy="11.500" r="4" stroke="#bbb" fill="none" /><path d="M.5 9.500h5v5h-5z" stroke="#f0b08c" fill="#525252" /></svg>Insertion</button>
      <button role="menuitemcheckbox" aria-checked="false"><svg class="check" width="12" height="12"></svg><svg width="20" height="20" viewBox="0 0 20 20"><path d="M10.500 2v10M1 14.500h7M13 14.500h6" stroke="#ccc" /><path d="M7.500 11.500h5v5h-5z" stroke="#e0a98c" fill="none" /></svg>Perpendicular</button>
      <button role="menuitemcheckbox" aria-checked="false"><svg class="check" width="12" height="12"></svg><svg width="20" height="20" viewBox="0 0 20 20"><circle cx="12" cy="12" r="7.500" stroke="#ccc" fill="none" /><path d="M0 12L12 0" stroke="#ccc" /><path d="M3.500 3.500h5v5h-5z" stroke="#f0b08c" fill="#525252" /></svg>Tangent</button>
      <button role="menuitemcheckbox" aria-checked="false"><svg class="check" width="12" height="12"></svg><svg width="20" height="20" viewBox="0 0 20 20"><path d="M1 18l7-8M13 5l4-4" stroke="#ccc" /><path d="M8.500 5.500h5v5h-5z" stroke="#f0b08c" fill="none" /><path d="M14.500 11.500h5v5h-5z" stroke="#ccc" fill="none" /></svg>Nearest</button>
      <button role="menuitemcheckbox" aria-checked="false"><svg class="check" width="12" height="12"></svg><svg width="20" height="20"><use href="#snap-x" width="20" height="20" /></svg>Apparent Intersection</button>
      <button role="menuitemcheckbox" aria-checked="false"><svg class="check" width="12" height="12"></svg><svg width="20" height="20" viewBox="0 0 20 20"><path d="M0 17L16 1M4 19L20 3" stroke="#ccc" /></svg>Parallel</button>
      <hr>
      <button class="settings" role="menuitem">Object Snap Settings...</button>
    </div>
    <div class="highlight"></div>

    <!-- Collapsed layer palette -->
    <aside class="layer-manager">
      <button aria-label="Close"><svg width="10" height="10"><use href="#close" /></svg></button>
      <button aria-label="Auto-hide"><svg width="11" height="11" viewBox="0 0 11 11"><path d="M5 1H1v9h4M1 5.500h9" stroke="currentColor" stroke-width="1.500" fill="none" /><path d="M7 2l4 3.500L7 9z" fill="currentColor" /></svg></button>
      <button aria-label="Palette properties"><svg width="12" height="12" viewBox="0 0 12 12"><circle cx="6" cy="6" r="3.500" stroke="currentColor" stroke-width="1.500" fill="none" /><path d="M4 0v3M8 0v3M4 9v3M8 9v3M0 4h3M0 8h3M9 4h3M9 8h3M0 0l3 3M12 0L9 3M0 12l3-3M12 12L9 9" stroke="currentColor" /></svg></button>
      <span>LAYER PROPERTIES MANAGER</span>
      <svg width="20" height="18" viewBox="0 0 20 18"><path d="M7 1h11l-5 7H1zM3 8l-2 4h12l5-7M3 12l-2 4h12l5-7" stroke="#aaa" stroke-width="1.300" fill="none" /></svg>
    </aside>
  </body>
</html>
```

FILE: styles.css
```css
* {
  box-sizing: border-box;
  margin: 0;
  padding: 0;
}

html,
body {
  height: 100%;
  overflow: hidden;
}

body {
  position: relative;
  display: flex;
  flex-direction: column;
  background-color: #373737;
  color: #f0f0f0;
  font-family: "Noto Sans", "Open Sans", sans-serif;
  font-size: 14px;
  line-height: 20px;
}

button,
select,
input {
  font: inherit;
  color: inherit;
  background: none;
  border: none;
}

button {
  white-space: nowrap;
}

a {
  color: inherit;
  text-decoration: none;
}

svg {
  display: block;
  flex-shrink: 0;
}

.sprite {
  position: absolute;
  width: 0;
  height: 0;
}

.caret {
  flex-shrink: 0;
  width: 0;
  height: 0;
  border: 3px solid transparent;
  border-top: 4px solid #fff;
  border-bottom: none;
}

.caret.wide {
  border-width: 5px 5px 0;
}

/* Ribbon tabs */
.ribbon-tabs {
  display: flex;
  flex-shrink: 0;
  height: 23px;
  padding-left: 3px;
  background-color: #525252;
  border-bottom: 1px solid #2b2b2b;
}

.ribbon-tab {
  padding: 0 12px;
  color: #d0d0d0;
}

.ribbon-tab.active {
  margin: 1px 1px -1px 0;
  color: #fff;
  background: linear-gradient(#777, #5e5e5e);
  border: 1px solid #2b2b2b;
  border-bottom: none;
  border-radius: 2px 2px 0 0;
  padding: 0 10px;
}

.ribbon-toggle {
  display: flex;
  align-items: center;
  gap: 7px;
  margin-left: 28px;
}

/* Ribbon panels */
.ribbon {
  display: flex;
  flex-shrink: 0;
  height: 124px;
  background-color: #464646;
  border-bottom: 1px solid #8c8c8c;
}

.panel {
  display: flex;
  flex-direction: column;
  flex-shrink: 0;
  background-color: #5c5c5c;
  border-right: 1px solid #3b3b3b;
  border-bottom: 1px solid #2b2b2b;
}

.panel-draw { width: 225px; }
.panel-modify { width: 316px; }
.panel-block { width: 202px; }
.panel-annotation { width: 236px; }
.panel-layers { width: 341px; }
.panel-properties { width: 332px; }
.panel-groups { width: 85px; }
.panel-utilities { width: 120px; }

.panel-body {
  display: grid;
  flex: 1;
  padding-top: 4px;
  align-items: start;
}

.panel-draw .panel-body { grid-template-columns: 54px 68px 46px 1fr; }
.panel-modify .panel-body { grid-template-columns: 91px 88px 95px 1fr; }
.panel-block .panel-body { grid-template-columns: 52px 1fr; }
.panel-annotation .panel-body { grid-template-columns: 58px 74px 1fr; }
.panel-layers .panel-body { grid-template-columns: 73px 1fr; gap: 2px; padding: 4px 3px 0 2px; }
.panel-properties .panel-body { grid-template-columns: 78px 1fr; }
.panel-groups .panel-body { grid-template-columns: 48px 1fr; }
.panel-utilities .panel-body { grid-template-columns: 84px 1fr; }

.panel-title {
  position: relative;
  display: flex;
  align-items: center;
  justify-content: center;
  gap: 7px;
  height: 22px;
  margin: 0 1px;
  background: linear-gradient(#484848, #505050);
}

.panel-draw .panel-title {
  padding-right: 52px;
}

.panel-title button {
  display: flex;
  align-items: center;
  gap: 7px;
}

.panel-title .launcher {
  position: absolute;
  right: 6px;
}

.tool-big {
  display: flex;
  flex-direction: column;
  align-items: center;
  padding-top: 3px;
}

.tool-big svg {
  margin-bottom: 5px;
}

.tool-big .caret {
  margin-top: 3px;
}

.tool-big.pressed {
  height: 90px;
  padding-top: 2px;
}

.pressed {
  background: linear-gradient(#8aacdc, #4f6a97);
  border: 1px solid #2c3d5e;
}

.tools {
  padding-left: 7px;
}

.panel-block .tools {
  padding-left: 3px;
}

.tool {
  display: flex;
  align-items: center;
  gap: 7px;
  height: 31px;
}

.tool .caret {
  margin-left: 7px;
}

.tool svg + .caret {
  margin-left: 2px;
}

.tools.icon-only {
  padding-left: 2px;
}

.icon-only .tool {
  width: 29px;
  justify-content: center;
}

.icon-only .pressed {
  height: 28px;
  margin-top: 1px;
}

.combo {
  display: flex;
  align-items: center;
  height: 28px;
  padding: 0 6px;
  background: linear-gradient(#727272, #565656);
  border: 1px solid #303030;
}

.combo select {
  flex: 1;
  min-width: 0;
  appearance: none;
}

.swatch {
  flex-shrink: 0;
  width: 20px;
  height: 20px;
  background-color: #bfbfbf;
}

.swatch.framed {
  width: 18px;
  height: 18px;
  margin: 0 7px 0 9px;
  border: 1px solid #000;
}

.layer-tools .combo {
  margin: 1px 0 2px;
  padding: 0 1px 0 7px;
}

.layer-row {
  display: flex;
  gap: 10px;
  height: 31px;
  padding-left: 4px;
}

.layer-row .labelled {
  display: flex;
  align-items: center;
  gap: 7px;
}

.property-combos {
  display: grid;
  grid-template-columns: 20px 1fr;
  column-gap: 4px;
  row-gap: 2px;
  align-items: center;
  padding: 2px 4px 0 1px;
}

.property-combos .combo {
  padding: 0 2px 0 4px;
}

.property-combos .swatch {
  margin: 0 12px 0 10px;
}

.line-sample {
  flex-shrink: 0;
  width: 80px;
  height: 1px;
  margin-right: 2px;
  background-color: #fff;
}

/* Drawing file tabs */
.file-tabs {
  display: flex;
  flex-shrink: 0;
  align-items: flex-end;
  height: 36px;
  border-bottom: 5px solid #5c5c5c;
  overflow: hidden;
}

.file-tab,
.layout-tab {
  position: relative;
  z-index: 0;
  display: flex;
  align-items: center;
  color: #b8b8b8;
}

.file-tab {
  justify-content: space-between;
  height: 28px;
  padding: 3px 16px 0 13px;
  white-space: nowrap;
}

.file-tab svg {
  color: #404040;
}

.file-tab.start { width: 144px; margin-left: -16px; padding-left: 0; }
.file-tab.detaljer { width: 153px; }
.file-tab.efs { width: 165px; }
.file-tab.bjalklag { width: 242px; }

/* Two skewed halves make the slanted tab outline */
.file-tab::before,
.file-tab::after,
.layout-tab::before,
.layout-tab::after {
  content: "";
  position: absolute;
  z-index: -1;
  top: 0;
  bottom: 0;
  background: linear-gradient(#686868, #545454);
}

.file-tab::before {
  left: 4px;
  right: 50%;
  transform: skewX(-20deg);
  border-radius: 8px 0 0 8px;
}

.file-tab::after {
  left: 40%;
  right: 4px;
  transform: skewX(20deg);
  border-radius: 0 8px 8px 0;
}

.file-tab.active {
  color: #fff;
}

.file-tab.active::before,
.file-tab.active::after {
  background: linear-gradient(#8b8b8b, #646464);
}

.new-tab {
  display: flex;
  align-items: center;
  justify-content: center;
  width: 26px;
  height: 19px;
  margin: 0 0 3px 7px;
  background-color: #5c5c5c;
  border-radius: 2px 12px 2px 12px;
}

/* Workspace */
.workspace {
  display: flex;
  flex: 1;
  min-height: 0;
  overflow: hidden;
  background-color: #5c5c5c;
}

.palette {
  flex-shrink: 0;
  width: 315px;
  padding: 3px 0;
  overflow: hidden;
}

.palette h2 {
  height: 27px;
  margin-right: 3px;
  font-size: 14px;
  font-weight: 400;
  line-height: 26px;
  text-indent: -36px;
  background-color: #525252;
  border-radius: 0 4px 0 0;
}

.selection-row {
  display: flex;
  align-items: center;
  gap: 10px;
  margin: 16px 0 5px;
}

.selection-row .combo {
  width: 238px;
  margin-left: -27px;
  padding: 0;
}

.selection-row .drop {
  display: flex;
  align-items: center;
  justify-content: center;
  width: 18px;
  height: 26px;
  border-left: 1px solid #303030;
}

.group {
  width: 298px;
  margin-bottom: 4px;
}

.group h3 {
  display: flex;
  align-items: center;
  justify-content: space-between;
  height: 27px;
  margin-left: -26px;
  padding-right: 9px;
  font-size: 14px;
  font-weight: 700;
  color: #fff;
  background-color: #494949;
  border: 1px solid #303030;
}

.group h3 i {
  width: 8px;
  height: 3px;
  background-color: #fff;
}

.group table {
  width: 100%;
  table-layout: fixed;
  border-collapse: separate;
  border-spacing: 0;
}

.group th,
.group td {
  height: 26px;
  font-weight: 400;
  text-align: left;
  white-space: nowrap;
  border-bottom: 1px solid #4f4f4f;
  border-right: 1px solid #4f4f4f;
}

.group th {
  width: 171px;
}

.group td {
  padding-left: 2px;
}

.group td.locked {
  color: #ababab;
}

.group .swatch,
.group .line-sample {
  display: inline-block;
  vertical-align: middle;
}

.group .swatch {
  width: 13px;
  height: 13px;
  margin: 0 7px 2px 2px;
  border: 1px solid #000;
}

.group .line-sample {
  width: 56px;
  margin-right: 6px;
}

/* Model space */
.drawing {
  display: flex;
  flex: 1;
  flex-direction: column;
  min-width: 0;
}

.canvas {
  position: relative;
  flex: 1;
  overflow: hidden;
  background-color: #212830;
}

.grid {
  width: 100%;
  height: 100%;
}

.view-label {
  position: absolute;
  top: 5px;
  left: 3px;
}

.window-buttons {
  position: absolute;
  top: 10px;
  right: 36px;
  display: flex;
  gap: 11px;
}

.view-cube {
  position: absolute;
  top: 48px;
  right: 20px;
  overflow: visible;
}

.compass {
  fill: #bbb;
  font: 700 22px "Liberation Sans", sans-serif;
  text-anchor: middle;
}

.face {
  fill: #4b5158;
  font: 700 12px "Open Sans", sans-serif;
  text-anchor: middle;
}

.wcs {
  fill: #4b4d58;
  font: 13px "Liberation Sans", sans-serif;
}

.ucs {
  position: absolute;
  bottom: 8px;
  left: 14px;
  overflow: visible;
}

.ucs text {
  fill: #e8e8e8;
  font: 300 22px "Open Sans", sans-serif;
}

/* Command line */
.command {
  display: flex;
  height: 63px;
  border-top: 3px solid #6a6a6a;
  border-bottom: 2px solid #707070;
}

.command-handle {
  display: flex;
  flex-direction: column;
  align-items: center;
  gap: 10px;
  width: 29px;
  padding-top: 5px;
  overflow: hidden;
  background: linear-gradient(#6a6a6a, #3c3c3c);
  border-left: 1px solid #888;
}

.grip {
  width: 22px;
  height: 6px;
  background: repeating-linear-gradient(90deg, #aaa 0 2px, transparent 2px 4px);
  border-bottom: 2px solid #6a6a6a;
}

.command-body {
  display: flex;
  flex: 1;
  flex-direction: column;
  font-family: "DejaVu Sans Mono", monospace;
  font-size: 15px;
}

.command-body output {
  height: 33px;
  padding: 11px 3px 0;
  color: #222;
  background-color: #c8c8c8;
  border-bottom: 1px solid #777;
}

.command-line {
  display: flex;
  flex: 1;
  align-items: center;
  gap: 4px;
  padding-left: 6px;
  background-color: #fff;
}

.command-line .caret {
  border-width: 4px 4px 0;
  border-top-color: #777;
}

.command-line input {
  flex: 1;
  margin-left: 5px;
  font-style: italic;
}

.command-line input::placeholder {
  color: #999;
}

/* Layout tabs */
.layout-tabs {
  display: flex;
  flex-shrink: 0;
  height: 24px;
  padding-bottom: 1px;
}

.layout-tab {
  margin-right: 1px;
  padding: 0 15px;
  white-space: nowrap;
}

.layout-tab::before {
  left: 4px;
  right: 50%;
  transform: skewX(18deg);
  border-radius: 0 0 0 8px;
}

.layout-tab::after {
  left: 40%;
  right: 4px;
  transform: skewX(-18deg);
  border-radius: 0 0 8px 0;
}

.layout-tab.model {
  margin-left: -26px;
  padding-left: 0;
  font-weight: 700;
  color: #fff;
}

.layout-tab.active::before,
.layout-tab.active::after {
  background: #8a8a8a;
}

.layout-tab.add {
  padding: 0 11px;
}

/* Status bar */
.status {
  display: flex;
  flex-shrink: 0;
  justify-content: flex-end;
  gap: 2px;
  padding-top: 1px;
}

.status-group {
  display: flex;
  align-items: center;
  height: 33px;
  background-color: #525252;
  border: 1px solid #808080;
}

.status-group.joined {
  margin-right: -3px;
}

.status-group.roomy {
  gap: 2px;
  padding: 0 3px;
}

.status-group button {
  display: flex;
  align-items: center;
  justify-content: center;
  width: 30px;
  height: 29px;
  color: #ddd;
}

.status-group .on {
  width: 28px;
  background-color: #6190c4;
}

.status-group .on + .on {
  margin-left: 2px;
}

.status-group .bright {
  color: #fff;
}

.status-group .drop {
  width: 20px;
}

.status-group .text {
  width: 59px;
  color: #fff;
}

.status-group .scale {
  gap: 4px;
  width: 41px;
}

.desktop-edge {
  flex-shrink: 0;
  height: 7px;
  background-color: #434343;
}

.desktop-edge i {
  display: block;
  height: 100%;
  margin-left: 270px;
  background-color: #464646;
}

/* Object snap menu, opens upwards from its status button */
.snap-menu {
  position: absolute;
  right: 237px;
  bottom: 40px;
  width: 214px;
  padding: 1px 0;
  background-color: #525252;
  border: 2px solid #808080;
}

.snap-menu button {
  display: flex;
  align-items: center;
  width: 100%;
  height: 30px;
  padding-left: 7px;
  color: #fff;
}

.snap-menu svg {
  margin-right: 6px;
}

.snap-menu .check path {
  fill: none;
  stroke: #fff;
  stroke-width: 3;
}

.snap-menu hr {
  height: 1px;
  border: none;
  background-color: #999;
}

.snap-menu .settings {
  height: 33px;
  padding: 4px 0 0 25px;
}

.highlight {
  position: absolute;
  right: 391px;
  bottom: 0;
  width: 65px;
  height: 46px;
  border: 5px solid #ec1c24;
}

.layer-manager {
  position: absolute;
  top: 165px;
  right: 2px;
  bottom: 40px;
  display: flex;
  flex-direction: column;
  align-items: center;
  gap: 13px;
  width: 27px;
  padding: 8px 0 5px;
  color: #bbb;
  background-color: #525252;
  border: 1px solid #3c3c3c;
  border-radius: 4px;
}

.layer-manager span {
  margin-top: auto;
  writing-mode: vertical-rl;
  transform: rotate(180deg);
  color: #b0b0b0;
}
```
